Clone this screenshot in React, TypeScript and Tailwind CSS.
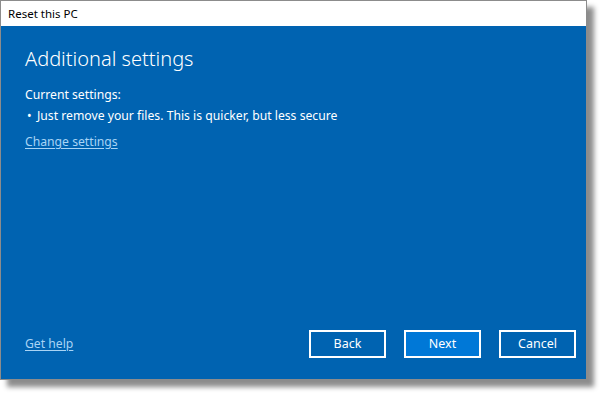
export default function App() {
  return (
    <div className="h-[393px] w-[600px] bg-white" style={{ fontFamily: '"Noto Sans", "Open Sans", sans-serif' }}>
      <div className="flex h-[380px] w-[587px] flex-col border border-[#8c8c8c] shadow-[7px_7px_5px_rgba(0,0,0,0.45)]">
        <div className="flex h-[25px] items-center bg-white pl-[7px] text-[11.5px] text-black">
          Reset this PC
        </div>
        <div className="flex flex-1 flex-col bg-[#0063b1] pl-6 pr-[10px] text-white">
          <h1 className="mt-[17px] text-[20px] font-light leading-[32px]">Additional settings</h1>
          <p className="mt-[11px] text-[12.2px] leading-[18px]">Current settings:</p>
          <div className="mt-[3px] flex items-center text-[12.2px] leading-[18px]">
            <span className="w-[12px] pl-[2px]">•</span>
            <span>Just remove your files. This is quicker, but less secure</span>
          </div>
          <a className="mt-[8px] self-start text-[12.2px] leading-[18px] text-[#a9d4f5] underline underline-offset-2">
            Change settings
          </a>
          <div className="mt-auto mb-[21px] flex items-center justify-between">
            <a className="text-[12.2px] text-[#a9d4f5] underline underline-offset-2">Get help</a>
            <div className="flex gap-[18px]">
              <button className="h-[28px] w-[77px] border-2 border-white bg-[#0063b1] text-[12.5px]">Back</button>
              <button className="h-[28px] w-[77px] border-2 border-white bg-[#0078d7] text-[12.5px]">Next</button>
              <button className="h-[28px] w-[77px] border-2 border-white bg-[#0063b1] text-[12.5px]">Cancel</button>
            </div>
          </div>
        </div>
      </div>
    </div>
  )
}
